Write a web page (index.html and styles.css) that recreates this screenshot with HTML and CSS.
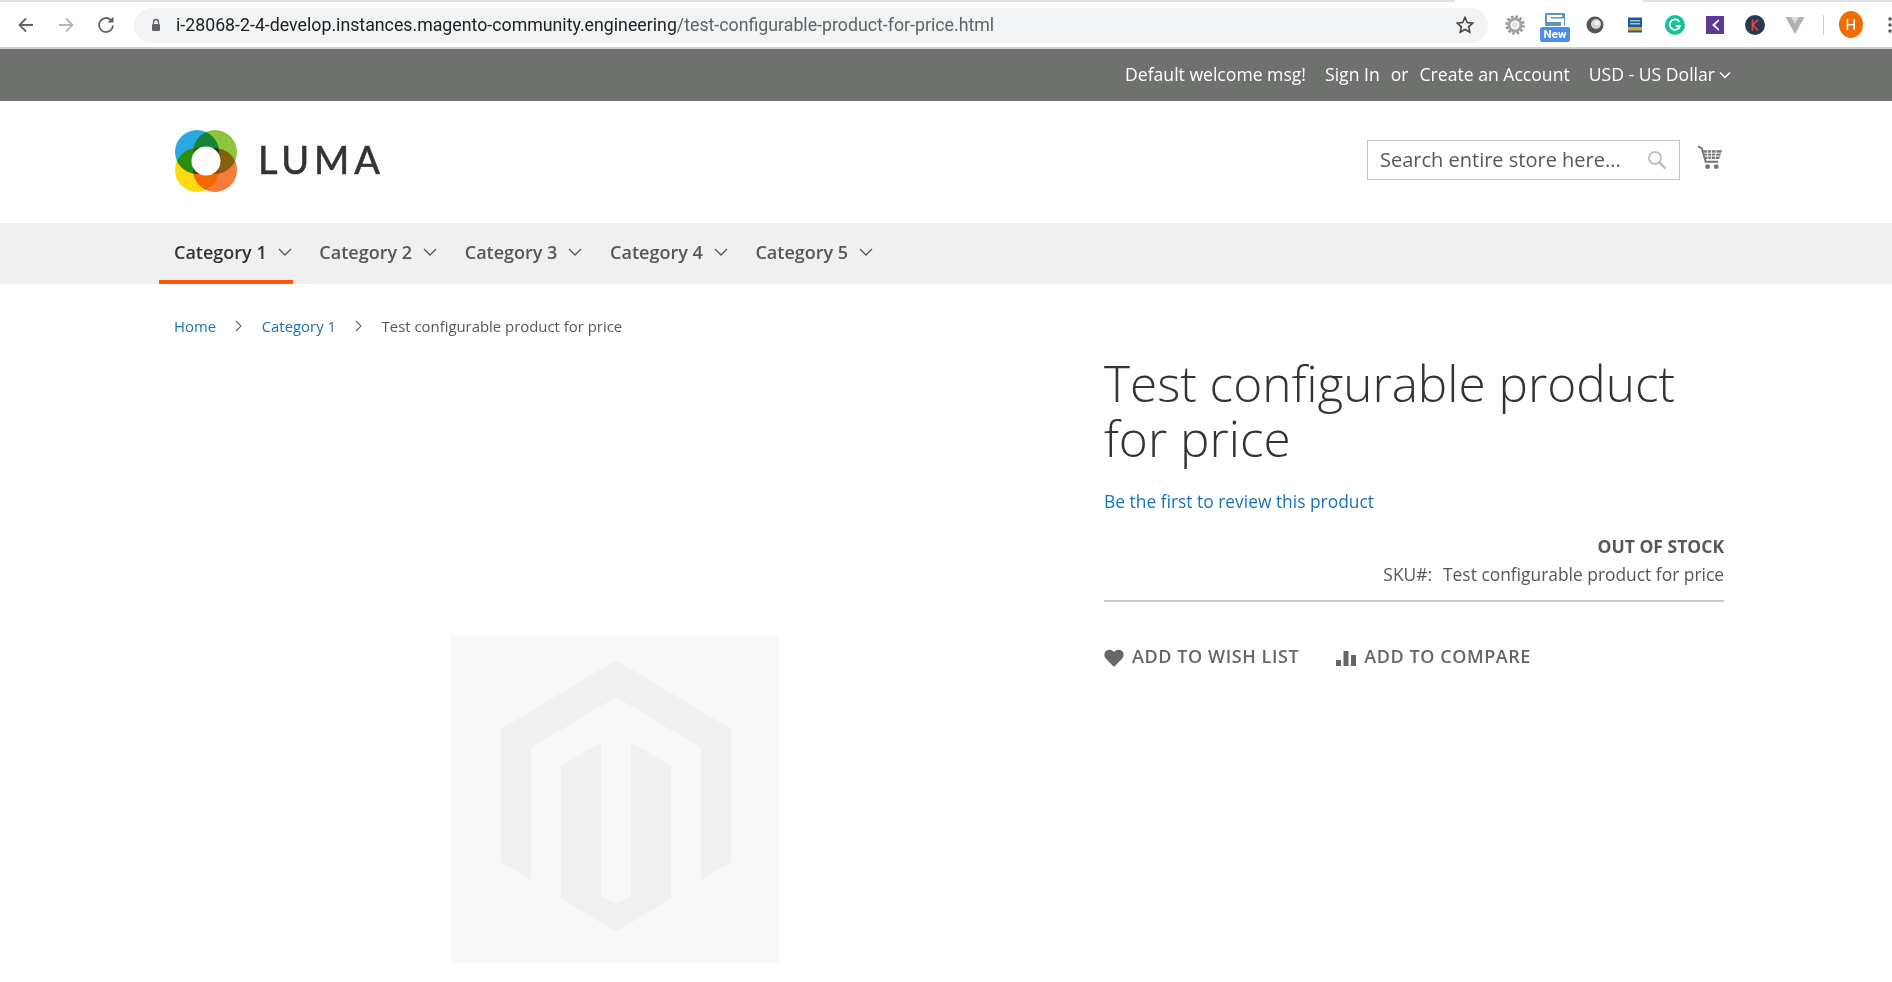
FILE: index.html
```html
<!DOCTYPE html>
<html lang="en">
<head>
<meta charset="utf-8">
<title>Test configurable product for price</title>
<link rel="stylesheet" href="styles.css">
</head>
<body>
<div class="tabstrip"><div class="tabstrip-active"></div></div>
<div class="chrome">
  <div class="chrome-nav">
    <svg class="cicon" viewBox="0 0 20 20"><path d="M17 10H4M10 3.500L3.500 10l6.500 6.500" fill="none" stroke="#5f6368" stroke-width="1.800"/></svg>
    <svg class="cicon" viewBox="0 0 20 20"><path d="M3 10h13M10 3.500l6.500 6.500-6.500 6.500" fill="none" stroke="#b4b6b9" stroke-width="1.800"/></svg>
    <svg class="cicon" viewBox="0 0 20 20"><path d="M17 10.500a7 7 0 1 1-2-5.400" fill="none" stroke="#5f6368" stroke-width="1.800"/><path d="M17.500 1.500v6h-6z" fill="#5f6368"/></svg>
  </div>
  <div class="omnibox">
    <svg class="lock" viewBox="0 0 12 14"><path d="M3.500 6V4a2.500 2.500 0 0 1 5 0v2" fill="none" stroke="#5f6368" stroke-width="1.300"/><rect x="2" y="6" width="8" height="7" rx="1" fill="#5f6368"/></svg>
    <span class="url"><span class="url-host">i-28068-2-4-develop.instances.magento-community.engineering</span>/test-configurable-product-for-price.html</span>
    <svg class="star" viewBox="0 0 20 20"><path d="M10 2.500l2.300 5 5.400.6-4 3.700 1.100 5.400-4.800-2.700-4.800 2.700 1.100-5.400-4-3.700 5.400-.6z" fill="none" stroke="#444" stroke-width="1.600"/></svg>
  </div>
  <div class="exts">
    <svg class="ext" viewBox="0 0 20 20"><circle cx="10" cy="10" r="8" fill="none" stroke="#9a9a9a" stroke-width="3.500" stroke-dasharray="2.500 1.700"/><circle cx="10" cy="10" r="6" fill="none" stroke="#a5a5a5" stroke-width="3"/><circle cx="10" cy="10" r="3" fill="#e2e2e2"/></svg>
    <div class="ext-new">
      <svg class="ext-new-top" viewBox="0 0 22 13"><rect x="1" y="0" width="20" height="13" rx="1" fill="#5c93c9"/><path d="M3 2h15v2H7v1.500h13V13h-3V9H3z" fill="#fff"/></svg>
      <span class="ext-new-label">New</span>
    </div>
    <svg class="ext" viewBox="0 0 20 20"><circle cx="10" cy="10" r="8.500" fill="#555"/><circle cx="11" cy="9" r="5" fill="#d5d5d5"/><circle cx="12" cy="8" r="2.500" fill="#f5f5f5"/></svg>
    <svg class="ext" viewBox="0 0 20 20"><rect x="3" y="2.500" width="14" height="15" fill="#1f5a94"/><rect x="5" y="5" width="10" height="1.500" fill="#9cc"/><rect x="5" y="8" width="10" height="1.500" fill="#9cc"/><rect x="3" y="12" width="14" height="3.500" fill="#e0a030"/></svg>
    <svg class="ext" viewBox="0 0 20 20"><circle cx="10" cy="10" r="10" fill="#15c39a"/><path d="M14.500 7a5.200 5.200 0 1 0 .5 4h-4" fill="none" stroke="#fff" stroke-width="1.800"/></svg>
    <svg class="ext" viewBox="0 0 20 20"><rect x="1" y="1" width="18" height="18" fill="#5b3a9a"/><path d="M14 4l-7 6 7 6v-2l-4-4 4-4z" fill="#fff"/></svg>
    <svg class="ext" viewBox="0 0 20 20"><circle cx="10" cy="10" r="10" fill="#263b52"/><path d="M7.500 4.500v11M13 4.500L8 10l5 5.500" fill="none" stroke="#e2453c" stroke-width="1.800"/></svg>
    <svg class="ext" viewBox="0 0 20 20"><path d="M.5 2h19L10 19z" fill="#b0b0b0"/><path d="M6 2h8l-4 7z" fill="#dcdcdc"/></svg>
    <span class="ext-sep"></span>
    <span class="avatar">H</span>
    <svg class="kebab" viewBox="0 0 4 16"><circle cx="2" cy="2" r="1.700"/><circle cx="2" cy="8" r="1.700"/><circle cx="2" cy="14" r="1.700"/></svg>
  </div>
</div>

<div class="panel">
  <div class="wrap panel-inner">
    <span>Default welcome msg!</span>
    <a href="#">Sign In</a>
    <span class="or">or</span>
    <a href="#">Create an Account</a>
    <span class="currency">USD - US Dollar<svg class="cur-caret" viewBox="0 0 12 8"><path d="M1 1.500l5 5 5-5" fill="none" stroke="#fff" stroke-width="1.500"/></svg></span>
  </div>
</div>

<header class="wrap header">
  <a class="logo" href="#">
    <svg class="logo-mark" viewBox="0 0 62 62">
      <g class="logo-group">
        <circle class="logo-disc" cx="22" cy="22" r="22" fill="#29a9e0"/>
        <circle class="logo-disc" cx="40" cy="22" r="22" fill="#8cc63f"/>
        <circle class="logo-disc" cx="22" cy="40" r="22" fill="#ffd90f"/>
        <circle class="logo-disc" cx="40" cy="40" r="22" fill="#f47b3a"/>
      </g>
      <circle cx="31" cy="31" r="14.500" fill="#fff"/>
    </svg>
    <span class="logo-text">LUMA</span>
  </a>
  <div class="header-tools">
    <div class="search">
      <span class="search-text">Search entire store here...</span>
      <svg class="search-icon" viewBox="0 0 20 20"><circle cx="8" cy="8" r="6" fill="none" stroke="#c2c2c2" stroke-width="2"/><path d="M12.500 12.500l6 6" stroke="#c2c2c2" stroke-width="2.500"/></svg>
    </div>
    <svg class="cart" viewBox="0 0 27 27"><path d="M1 2l4 2 4 14h13" fill="none" stroke="#757575" stroke-width="2"/><path d="M6 6h20l-3 9H9z" fill="#757575"/><path d="M10.500 6l1 9M15 6v9M20 6l-1 9M7 9h18M8 12h16" stroke="#fff" stroke-width="1"/><circle cx="11" cy="23" r="2.500" fill="#757575"/><circle cx="20" cy="23" r="2.500" fill="#757575"/></svg>
  </div>
</header>

<nav class="nav">
  <div class="wrap nav-inner">
    <a class="nav-item active" href="#">Category 1<svg class="caret" viewBox="0 0 14 8"><path d="M1 1l6 6 6-6" fill="none" stroke="#555" stroke-width="1.300"/></svg></a>
    <a class="nav-item" href="#">Category 2<svg class="caret" viewBox="0 0 14 8"><path d="M1 1l6 6 6-6" fill="none" stroke="#555" stroke-width="1.300"/></svg></a>
    <a class="nav-item" href="#">Category 3<svg class="caret" viewBox="0 0 14 8"><path d="M1 1l6 6 6-6" fill="none" stroke="#555" stroke-width="1.300"/></svg></a>
    <a class="nav-item" href="#">Category 4<svg class="caret" viewBox="0 0 14 8"><path d="M1 1l6 6 6-6" fill="none" stroke="#555" stroke-width="1.300"/></svg></a>
    <a class="nav-item" href="#">Category 5<svg class="caret" viewBox="0 0 14 8"><path d="M1 1l6 6 6-6" fill="none" stroke="#555" stroke-width="1.300"/></svg></a>
  </div>
</nav>

<div class="wrap crumbs">
  <a href="#">Home</a>
  <svg class="crumb-sep" viewBox="0 0 7 12"><path d="M1 1l5 5-5 5" fill="none" stroke="#666" stroke-width="1.100"/></svg>
  <a href="#">Category 1</a>
  <svg class="crumb-sep" viewBox="0 0 7 12"><path d="M1 1l5 5-5 5" fill="none" stroke="#666" stroke-width="1.100"/></svg>
  <span>Test configurable product for price</span>
</div>

<main class="wrap product">
  <section class="gallery">
    <div class="placeholder">
      <svg class="placeholder-mark" viewBox="0 0 230 272">
        <path fill="#f0f0f0" d="M115 0L230 69V202L200 220V88L115 37 30 88V220L0 202V69Z"/>
        <path fill="#f0f0f0" d="M100 82V235L115 244 130 235V82L170 106V238L115 272 60 238V106Z"/>
      </svg>
    </div>
  </section>
  <section class="info">
    <h1 class="title">Test configurable product for price</h1>
    <a class="review" href="#">Be the first to review this product</a>
    <div class="stock">OUT OF STOCK</div>
    <div class="sku"><span class="sku-label">SKU#:</span>Test configurable product for price</div>
    <div class="actions">
      <a class="action" href="#"><svg class="heart" viewBox="0 0 20 18"><path d="M10 18L1.800 9.500C-.5 7 .2 3 2.500 1.500 5 0 8 .5 10 3c2-2.500 5-3 7.500-1.500C19.800 3 20.500 7 18.200 9.500z" fill="#666"/></svg>ADD TO WISH LIST</a>
      <a class="action" href="#"><svg class="bars" viewBox="0 0 20 16"><rect y="10" width="5" height="6" fill="#666"/><rect x="7.500" y="1" width="5" height="15" fill="#666"/><rect x="15" y="5" width="5" height="11" fill="#666"/></svg>ADD TO COMPARE</a>
    </div>
  </section>
</main>
</body>
</html>
```

FILE: styles.css
```css
* { box-sizing: border-box; }
html, body { margin: 0; padding: 0; height: 982px; overflow: hidden; background: #fff; }
body { font-family: "Open Sans", "Liberation Sans", sans-serif; color: #333; font-size: 18px; }
a { text-decoration: none; color: inherit; }
svg { display: block; flex: none; }

.tabstrip { height: 2px; background: #dee1e6; }
.tabstrip-active { height: 2px; width: 188px; margin-left: 1455px; background: #fff; }
.chrome { height: 47px; display: flex; align-items: center; background: #fff; border-bottom: 2px solid #d0d0d0; font-family: Roboto, "Liberation Sans", sans-serif; overflow: hidden; }
.chrome-nav { width: 134px; display: flex; gap: 20px; padding-left: 16px; flex: none; }
.cicon { width: 20px; height: 20px; }
.omnibox { width: 1354px; height: 35px; border-radius: 18px; background: #f1f3f4; display: flex; align-items: center; padding: 0 13px 0 16px; flex: none; margin-top: 1px; }
.lock { width: 12px; height: 14px; }
.url { flex: 1; margin-left: 14px; font-size: 17.750px; color: #5f6368; white-space: nowrap; }
.url-host { color: #202124; }
.star { width: 20px; height: 20px; }
.exts { flex: none; width: 404px; display: flex; align-items: center; gap: 20px; padding-left: 17px; }
.ext { width: 20px; height: 20px; }
.ext-new { width: 30px; height: 30px; margin: 6px -5px 0; display: flex; flex-direction: column; align-items: center; }
.ext-new-top { width: 22px; height: 13px; }
.ext-new-label { background: #4d8df0; color: #fff; font-size: 11.500px; font-weight: 700; line-height: 15px; width: 30px; margin-top: 1px; text-align: center; border-radius: 2px; }
.ext-sep { width: 1px; height: 20px; background: #ccc; margin-left: -2px; }
.avatar { width: 27px; height: 27px; margin-left: -5px; border-radius: 50%; background: #ef6c00; color: #fff; font-size: 15px; display: flex; align-items: center; justify-content: center; }
.kebab { width: 4px; height: 16px; fill: #555; margin-left: 5px; }

.wrap { width: 1550px; margin-left: 174px; }
.panel { height: 52px; background: #6e716e; color: #fff; }
.panel-inner { height: 100%; padding-bottom: 2px; display: flex; align-items: center; justify-content: flex-end; font-size: 17.600px; white-space: nowrap; }
.panel-inner > * { margin-left: 19px; }
.panel-inner .or { margin-left: 11px; margin-right: -8px; }
.currency { display: flex; align-items: center; gap: 4px; margin-right: -7px; }
.cur-caret { width: 12px; height: 8px; margin-top: 2px; }

.header { height: 122px; padding-bottom: 5px; display: flex; align-items: center; justify-content: space-between; }
.logo { display: flex; align-items: center; gap: 21px; margin-left: 1px; margin-top: 2px; }
.logo-mark { width: 62px; height: 62px; }
.logo-group { isolation: isolate; }
.logo-disc { mix-blend-mode: multiply; }
.logo-text { font-family: "Lato", sans-serif; font-size: 38px; letter-spacing: 4.800px; color: #333; -webkit-text-stroke: .6px #333; margin-top: -4px; }
.header-tools { display: flex; align-items: center; gap: 17px; margin-right: 1px; }
.search { width: 313px; height: 40px; border: 1px solid #c2c2c2; display: flex; align-items: center; justify-content: space-between; padding: 0 12px; color: #575757; font-size: 20px; }
.search-icon { width: 20px; height: 20px; }
.cart { width: 26px; height: 27px; margin-top: -4px; }

.nav { height: 61px; background: #f0f0f0; }
.nav-inner { display: flex; height: 100%; }
.nav-item { display: flex; align-items: center; height: 100%; padding: 0 12px 4px 0; margin-right: 15.700px; gap: 11px; font-weight: 600; font-size: 18px; color: #575757; white-space: nowrap; }
.nav-item.active { color: #333; position: relative; }
.nav-item.active::after { content: ""; position: absolute; left: -15px; right: 11px; bottom: 0; height: 4px; background: #ff5501; }
.caret { width: 14px; height: 8px; }

.crumbs { display: flex; align-items: center; gap: 19.300px; margin-top: 31px; height: 22px; font-size: 14.900px; color: #575757; }
.crumbs a { color: #1873bd; }
.crumb-sep { width: 7px; height: 12px; }

.product { display: flex; justify-content: space-between; }
.gallery { width: 882px; display: flex; justify-content: center; padding-top: 298px; }
.placeholder { width: 328px; height: 328px; background: #f8f8f8; display: flex; justify-content: center; padding: 25px 0 0 2px; }
.placeholder-mark { width: 230px; height: 272px; }
.info { width: 620px; }
.title { font-weight: 300; font-size: 49.500px; line-height: 55px; margin: 19px 0 0; color: #333; }
.review { display: block; margin-top: 23px; font-size: 17.400px; line-height: 24px; color: #1873bd; }
.stock { text-align: right; font-weight: 700; font-size: 17.500px; line-height: 24px; margin-top: 21px; color: #575757; }
.sku { text-align: right; font-size: 17.400px; line-height: 24px; margin-top: 4px; color: #575757; padding-bottom: 14px; border-bottom: 2px solid #c9c9c9; }
.sku-label { margin-right: 11px; }
.actions { display: flex; gap: 37px; margin-top: 42px; }
.action { display: flex; align-items: center; gap: 8px; font-weight: 600; font-size: 18px; letter-spacing: .58px; color: #666; }
.heart { width: 20px; height: 18px; margin-top: 3px; }
.bars { width: 20px; height: 16px; margin-top: 4px; }
```
